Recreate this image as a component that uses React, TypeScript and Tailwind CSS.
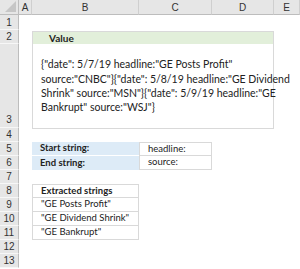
import React from 'react';

const COLS = ['A', 'B', 'C', 'D', 'E'];
const ROWS = [1, 2, 3, 4, 5, 6, 7, 8, 9, 10, 11, 12, 13];

const rowStart: Record<number, string> = {
  1: 'row-start-2',
  2: 'row-start-3',
  3: 'row-start-4',
  4: 'row-start-5',
  5: 'row-start-6',
  6: 'row-start-7',
  7: 'row-start-8',
  8: 'row-start-9',
  9: 'row-start-10',
  10: 'row-start-11',
  11: 'row-start-12',
  12: 'row-start-13',
  13: 'row-start-14',
};

const colStart: Record<string, string> = {
  A: 'col-start-2',
  B: 'col-start-3',
  C: 'col-start-4',
  D: 'col-start-5',
  E: 'col-start-6',
};

const extracted = ['"GE Posts Profit"', '"GE Dividend Shrink"', '"GE Bankrupt"'];

const valueLines = [
  '{"date": 5/7/19 headline:"GE Posts Profit"',
  'source:"CNBC"}{"date": 5/8/19 headline:"GE Dividend',
  'Shrink" source:"MSN"}{"date": 5/9/19 headline:"GE',
  'Bankrupt" source:"WSJ"}',
];

const App: React.FC = () => {
  return (
    <div className="w-[300px] h-[269px] overflow-hidden bg-white text-[#222] font-['Lato','Liberation_Sans',sans-serif]">
      <div className="grid grid-cols-[19px_13px_107px_73px_62px_1fr] grid-rows-[15px_15px_14px_84px_repeat(10,14px)]">
        {/* Corner */}
        <div className="col-start-1 row-start-1 bg-[#e6e6e6] border-r border-b border-[#bdbdbd] relative">
          <div className="absolute right-[2px] bottom-[2px] w-0 h-0 border-l-[11px] border-l-transparent border-b-[11px] border-b-[#c6c6c6]" />
        </div>

        {/* Column headers */}
        {COLS.map((c) => (
          <div
            key={c}
            className={`${colStart[c]} row-start-1 bg-[#e6e6e6] border-r border-b border-r-[#cfcfcf] border-b-[#bdbdbd] flex items-center justify-center text-[10px] text-[#333] font-['Liberation_Sans',sans-serif]`}
          >
            {c}
          </div>
        ))}

        {/* Row headers */}
        {ROWS.map((r) => (
          <div
            key={r}
            className={`col-start-1 ${rowStart[r]} bg-[#e6e6e6] border-r border-b border-r-[#bdbdbd] border-b-[#f7f7f7] flex justify-center text-[10px] text-[#333] font-['Liberation_Sans',sans-serif] ${r === 3 ? 'items-end' : 'items-center'}`}
          >
            {r}
          </div>
        ))}

        {/* Value box B2:D3 */}
        <div className="col-start-3 col-span-3 row-start-3 row-span-2 flex flex-col border border-[#d9d9d9] mt-px -mb-px">
          <div className="h-[12px] bg-[#e2efda] flex items-center pl-[16px] text-[10px] font-bold leading-none">
            Value
          </div>
          <div className="flex-1 flex items-center pl-[8px] text-[10.5px] leading-[14.3px] whitespace-nowrap">
            <p>
              {valueLines.map((l, i) => (
                <span key={i} className="block">
                  {l}
                </span>
              ))}
            </p>
          </div>
        </div>

        {/* Start / End string */}
        <div className="col-start-3 row-start-6 bg-[#ddebf7] border-b border-white flex items-center pl-[8px] text-[9.5px] font-bold">
          Start string:
        </div>
        <div className="col-start-4 row-start-6 border border-[#d9d9d9] flex items-center pl-[8px] text-[9.5px]">
          headline:
        </div>
        <div className="col-start-3 row-start-7 bg-[#ddebf7] flex items-center pl-[8px] text-[9.5px] font-bold">
          End string:
        </div>
        <div className="col-start-4 row-start-7 border border-t-0 border-[#d9d9d9] flex items-center pl-[8px] text-[9.5px]">
          source:
        </div>

        {/* Extracted strings */}
        <div className="col-start-3 row-start-9 border border-[#d9d9d9] flex items-center pl-[8px] text-[9.5px] font-bold">
          Extracted strings
        </div>
        {extracted.map((s, i) => (
          <div
            key={s}
            className={`col-start-3 ${rowStart[9 + i]} border border-t-0 border-[#d9d9d9] flex items-center pl-[8px] text-[9.5px]`}
          >
            {s}
          </div>
        ))}
      </div>
    </div>
  );
};

export default App;
